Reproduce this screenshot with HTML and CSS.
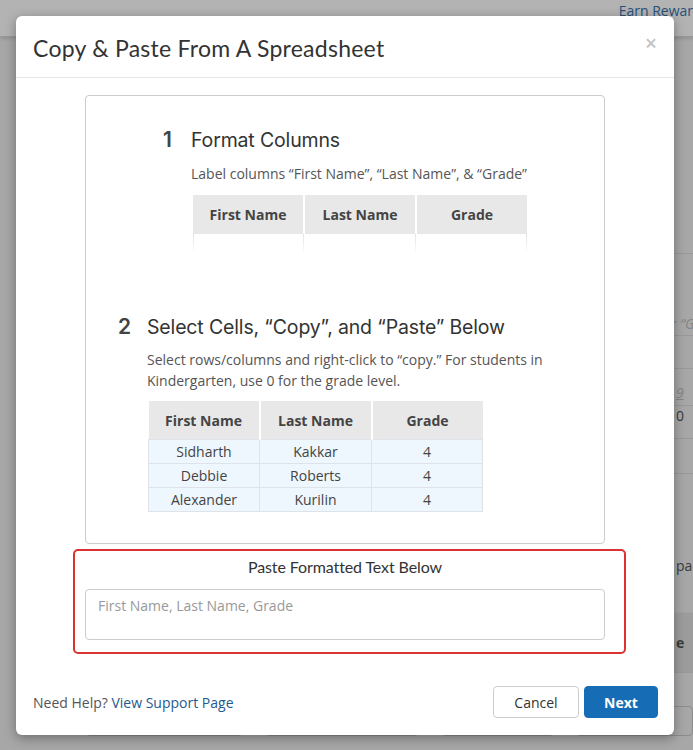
FILE: index.html
```html
<!DOCTYPE html>
<html lang="en">
<head>
    <meta charset="UTF-8">
    <title>Copy &amp; Paste From A Spreadsheet</title>
    <link rel="stylesheet" href="styles.css">
</head>
<body>

    <div class="page">
        <div class="topbar">
            <a class="rewards">Earn Rewar</a>
        </div>
        <div class="page-body">
            <div class="side">
                <div class="side-row row-a"><span class="hint">r “G</span></div>
                <div class="side-row row-b"></div>
                <div class="side-row row-c"><span class="hint"><u>9</u></span></div>
                <div class="side-row row-d">0</div>
                <div class="side-row row-e"></div>
                <div class="side-row row-f"></div>
                <div class="side-row row-g">pa</div>
                <div class="side-row row-h"><b>e</b></div>
            </div>
            <div class="btn-row">
                <span class="ghost-btn w1"></span>
                <span class="ghost-btn w2"></span>
                <span class="ghost-btn w3"></span>
                <span class="ghost-btn w4">an E</span>
            </div>
        </div>
    </div>

    <div class="modal">
        <div class="modal-header">
            <h2>Copy &amp; Paste From A Spreadsheet</h2>
            <span class="close">&times;</span>
        </div>

        <div class="modal-body">
            <div class="card">
                <div class="step step-one">
                    <div class="step-num">1</div>
                    <div class="step-content">
                        <h3>Format Columns</h3>
                        <p>Label columns “First Name”, “Last Name”, &amp; “Grade”</p>
                        <table class="sheet empty">
                            <tr><th>First Name</th><th>Last Name</th><th>Grade</th></tr>
                            <tr><td></td><td></td><td></td></tr>
                        </table>
                    </div>
                </div>

                <div class="step step-two">
                    <div class="step-num">2</div>
                    <div class="step-content">
                        <h3>Select Cells, “Copy”, and “Paste” Below</h3>
                        <p>Select rows/columns and right-click to “copy.” For students in Kindergarten, use 0 for the grade level.</p>
                        <table class="sheet">
                            <tr><th>First Name</th><th>Last Name</th><th>Grade</th></tr>
                            <tr><td>Sidharth</td><td>Kakkar</td><td>4</td></tr>
                            <tr><td>Debbie</td><td>Roberts</td><td>4</td></tr>
                            <tr><td>Alexander</td><td>Kurilin</td><td>4</td></tr>
                        </table>
                    </div>
                </div>
            </div>

            <div class="paste-box">
                <label for="pasteText">Paste Formatted Text Below</label>
                <textarea id="pasteText" placeholder="First Name, Last Name, Grade"></textarea>
            </div>
        </div>

        <div class="modal-footer">
            <div class="help">Need Help? <a>View Support Page</a></div>
            <div class="button-group">
                <button type="button" class="btn-cancel">Cancel</button>
                <button type="button" class="btn-next">Next</button>
            </div>
        </div>
    </div>

</body>
</html>
```

FILE: styles.css
```css
html, body {
    margin: 0;
    height: 100%;
    overflow: hidden;
}

body {
    font-family: 'Open Sans', sans-serif;
    background-color: #a7a7a7;
    color: #333;
}

.topbar {
    height: 36px;
    background-color: #b3b3b3;
    border-bottom: 1px solid #989898;
    box-shadow: 0 2px 3px rgba(0,0,0,0.12);
    display: flex;
    justify-content: flex-end;
}

.rewards {
    font-size: 14px;
    color: #27507a;
    line-height: 22px;
    white-space: nowrap;
}

.page-body {
    padding-top: 216px;
}

.side {
    margin-left: 663px;
    font-size: 14px;
    color: #3a3a3a;
    white-space: nowrap;
}

.side-row {
    border-top: 1px solid #999;
    padding-left: 13px;
    display: flex;
    align-items: center;
}

.hint {
    font-style: italic;
    color: #858585;
}

.row-a { height: 81px; align-items: flex-end; line-height: 20px; }
.row-a .hint { margin-bottom: 1px; margin-left: -5px; }
.row-b { height: 32px; }
.row-c { height: 36px; align-items: flex-end; line-height: 24px; }
.row-d { height: 32px; align-items: flex-start; line-height: 20px; }
.row-e { height: 34px; }
.row-f { height: 43px; }
.row-g { height: 94px; border-top-color: transparent; }
.row-h {
    height: 59px;
    background-color: #9c9c9c;
    border-top: 1px solid #a2a2a2;
    border-bottom: 1px solid #999;
}

.btn-row {
    display: flex;
    gap: 22px;
    padding-left: 86px;
    margin-top: 33px;
}

.ghost-btn {
    height: 30px;
    border: 1px solid #8c8c8c;
    border-radius: 4px;
    font-size: 14px;
    color: #3a3a3a;
    line-height: 30px;
    box-sizing: border-box;
}

.w1 { width: 168px; }
.w2 { width: 165px; }
.w3 { width: 121px; }
.w4 { width: 120px; padding-left: 68px; }

/* modal */

.modal {
    position: absolute;
    left: 16px;
    top: 16px;
    width: 658px;
    height: 719px;
    background: #fff;
    border-radius: 6px;
    box-shadow: 0 3px 12px rgba(0,0,0,0.35);
    display: flex;
    flex-direction: column;
}

.modal-header {
    height: 62px;
    box-sizing: border-box;
    border-bottom: 1px solid #e5e5e5;
    display: flex;
    align-items: center;
    justify-content: space-between;
    padding: 3px 17px 0;
}

.modal-header h2 {
    margin: 0;
    font-family: Lato, sans-serif;
    font-weight: 400;
    font-size: 23px;
    color: #333;
    letter-spacing: 0.25px;
}

.close {
    font-size: 21px;
    color: #c4c4c4;
    font-weight: 600;
    margin-top: -10px;
}

.modal-body {
    padding-top: 17px;
    flex: 1;
}

.card {
    width: 518px;
    margin: 0 auto;
    border: 1px solid #ccc;
    border-radius: 4px;
    padding: 29px 0 31px;
    display: flex;
    flex-direction: column;
    align-items: center;
}

.step {
    display: flex;
}

.step-num {
    font-family: Inter, sans-serif;
    font-size: 21px;
    font-weight: 600;
    color: #444;
    width: 28px;
    line-height: 30px;
}

.step-two {
    margin-top: 57px;
}

.step-two .step-num {
    width: 29px;
}

.step-two .step-content {
    width: 425px;
}

.step h3 {
    margin: 0;
    font-family: Inter, sans-serif;
    font-weight: 400;
    font-size: 19.5px;
    line-height: 30px;
    color: #333;
    letter-spacing: -0.15px;
}

.step p {
    margin: 8px 0 11px;
    font-size: 14px;
    line-height: 21px;
    color: #555;
}

.step-two p {
    margin: 7px 0 10px;
}

.sheet {
    border-collapse: collapse;
    font-size: 14px;
    color: #444;
    margin-left: 2px;
}

.step-two .sheet {
    margin-left: 1px;
}

.sheet th {
    background-color: #e8e8e8;
    font-weight: 700;
    font-size: 14px;
    height: 38px;
    padding: 0;
    border-left: 2px solid #fff;
    text-align: center;
}

.sheet th:first-child {
    border-left: none;
}

.sheet th, .sheet td {
    width: 110px;
}

.sheet td {
    background-color: #eef7fd;
    border: 1px solid #dde3e8;
    height: 23px;
    padding: 0;
    text-align: center;
    line-height: 23px;
}

.sheet.empty th {
    height: 39px;
}

.sheet.empty td {
    height: 21px;
    border: none;
    background-color: #fff;
    background-image: linear-gradient(#e2e2e2, #fff), linear-gradient(#e2e2e2, #fff);
    background-size: 1px 100%, 0 0;
    background-position: right top, left top;
    background-repeat: no-repeat;
}

.sheet.empty td:first-child {
    background-size: 1px 100%, 1px 100%;
}

.paste-box {
    margin: 5px 0 0 57px;
    width: 520px;
    border: 2px solid #dc3232;
    border-radius: 5px;
    padding: 6px 19px 12px 10px;
    text-align: center;
}

.paste-box label {
    display: block;
    font-family: Lato, sans-serif;
    font-size: 16px;
    color: #333;
    line-height: 20px;
    margin-bottom: 12px;
    letter-spacing: -0.1px;
}

.paste-box textarea {
    display: block;
    width: 100%;
    height: 51px;
    box-sizing: border-box;
    border: 1px solid #ccc;
    border-radius: 4px;
    padding: 6px 12px;
    font-family: 'Open Sans', sans-serif;
    font-size: 14px;
    resize: none;
}

.paste-box textarea::placeholder {
    color: #999;
}

.modal-footer {
    display: flex;
    align-items: center;
    justify-content: space-between;
    padding: 0 16px 17px 17px;
}

.help {
    font-size: 14px;
    color: #555;
}

.help a {
    color: #1e5a8e;
}

.button-group {
    display: flex;
    gap: 5px;
}

button {
    height: 32px;
    border-radius: 4px;
    font-family: 'Open Sans', sans-serif;
    font-size: 14px;
    cursor: pointer;
}

.btn-cancel {
    width: 86px;
    background: #fff;
    border: 1px solid #ccc;
    color: #333;
}

.btn-next {
    width: 74px;
    background-color: #176db5;
    border: 1px solid #176db5;
    color: #fff;
    font-weight: 700;
}
```
